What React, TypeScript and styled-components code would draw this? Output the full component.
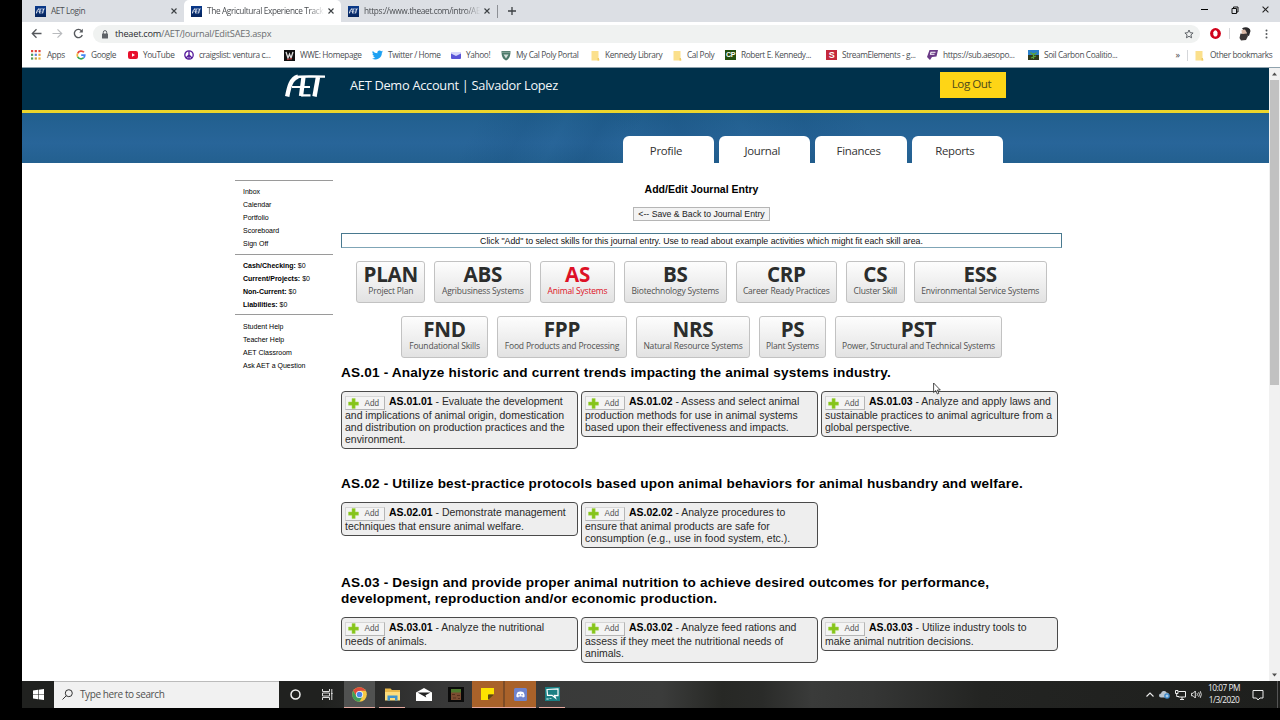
import React from "react";
import styled, { createGlobalStyle, css } from "styled-components";

const Global = createGlobalStyle`
  * { box-sizing: border-box; }
  html, body { margin: 0; padding: 0; background: #000; overflow: hidden; }
  body { font-family: "Liberation Sans", Arial, sans-serif; color: #000; }
  svg { display: block; flex: none; }
  button { font: inherit; margin: 0; padding: 0; }
`;

const ui = `"Open Sans", "Noto Sans", sans-serif`;

const Screen = styled.div`
  width: 1280px;
  height: 720px;
  padding-left: 22px;
  background: #000;
  overflow: hidden;
  position: relative;
`;

/* ---------- browser chrome ---------- */

const TabStrip = styled.div`
  height: 22px;
  display: flex;
  background: #dcdfe4;
  font-family: ${ui};
`;

const BrowserTab = styled.div<{ $w: number; $active?: boolean; $pad: number }>`
  width: ${(p) => p.$w}px;
  padding: 0 7px 0 ${(p) => p.$pad}px;
  display: flex;
  align-items: center;
  background: ${(p) => (p.$active ? "#fff" : "transparent")};
  border-radius: 5px 5px 0 0;
`;

const TabTitle = styled.span<{ $fade?: boolean }>`
  flex: 1;
  min-width: 0;
  margin-left: 5px;
  white-space: nowrap;
  font-size: 8.3px;
  line-height: 14px;
  letter-spacing: -0.38px;
  color: #4b4e52;
  ${(p) =>
    p.$fade &&
    css`
      mask-image: linear-gradient(90deg, #000 84%, transparent 97%);
    `}
`;

const TabDivider = styled.i`
  width: 1px;
  height: 13px;
  margin: 5px 10px 0 0;
  background: #8d9095;
`;

const WindowButtons = styled.div`
  margin-left: auto;
  width: 86px;
  display: flex;
  justify-content: space-between;
  align-items: center;
  padding: 0 11px 3px 7px;
`;

const Toolbar = styled.div`
  height: 23px;
  display: flex;
  align-items: center;
  background: #fff;
  padding-left: 9px;
`;

const NavIcons = styled.div`
  width: 62px;
  display: flex;
  align-items: center;
  gap: 10px;
`;

const Omnibox = styled.div`
  width: 1107px;
  height: 18px;
  border-radius: 9px;
  background: #f0f2f1;
  display: flex;
  align-items: center;
  padding: 0 6px 0 9px;
  margin-top: 1px;
`;

const Url = styled.span`
  flex: 1;
  margin-left: 7px;
  font: 9.2px/16px ${ui};
  letter-spacing: -0.24px;
  color: #6a6d70;
  b { font-weight: 400; color: #2b2d30; }
`;

const ToolbarEnd = styled.div`
  display: flex;
  align-items: center;
  gap: 8px;
  margin-left: 10px;
`;

const MenuDots = styled.svg`
  margin-left: 6px;
`;

const Bar = styled.i<{ $h: number; $c?: string }>`
  width: 1px;
  height: ${(p) => p.$h}px;
  background: ${(p) => p.$c ?? "#d5d7da"};
`;

const Bookmarks = styled.div`
  height: 23px;
  display: flex;
  align-items: center;
  background: #fff;
  padding: 0 0 2px 9px;
  border-bottom: 1px solid #8fa2ad;
`;

const Bookmark = styled.div<{ $w: number; $gap?: number }>`
  width: ${(p) => p.$w}px;
  display: flex;
  align-items: center;
  gap: ${(p) => p.$gap ?? 5}px;
  white-space: nowrap;
  font: 8.3px/14px ${ui};
  letter-spacing: -0.38px;
  color: #4b4e52;
`;

const BookmarkEnd = styled.div`
  margin-left: auto;
  display: flex;
  align-items: center;
  gap: 7px;
  font: 9px/14px ${ui};
  color: #444;
`;

/* ---------- page ---------- */

const Viewport = styled.div`
  height: 613px;
  display: flex;
  background: #fff;
`;

const Page = styled.div`
  width: 1247px;
  overflow: hidden;
`;

const SiteHeader = styled.header`
  height: 45px;
  padding: 4px 263px 0 263px;
  display: flex;
  align-items: flex-start;
  background: #00314b;
  border-bottom: 3px solid #edd52c;
`;

const Account = styled.div`
  margin: 4px 0 0 25px;
  font: 12.8px/18px ${ui};
  letter-spacing: -0.28px;
  color: #f3f7f9;
`;

const LogOut = styled.button`
  margin-left: auto;
  width: 66px;
  height: 26px;
  border: 0;
  background: #fed516;
  font: 11.6px/24px ${ui};
  letter-spacing: -0.45px;
  padding: 0 3px 2px 0;
  color: #4c4a1c;
`;

const Banner = styled.nav`
  height: 50px;
  padding-right: 266px;
  display: flex;
  justify-content: flex-end;
  align-items: flex-end;
  gap: 5px;
  background:
    linear-gradient(118deg, transparent 36%, rgba(10, 60, 105, 0.12) 40%, transparent 43%, rgba(10, 60, 105, 0.16) 46%, transparent 49%),
    linear-gradient(64deg, transparent 48%, rgba(10, 60, 105, 0.16) 53%, transparent 58%, rgba(10, 60, 105, 0.12) 63%, transparent 68%),
    linear-gradient(#215f8e, #286599 60%, #23608f);
`;

const NavTab = styled.a`
  width: 91.3px;
  height: 27px;
  padding-right: 5px;
  border-radius: 6px 6px 0 0;
  background: #fff;
  text-align: center;
  font: 11.4px/29px ${ui};
  letter-spacing: -0.3px;
  color: #333;
`;

const Columns = styled.div`
  display: flex;
  padding-left: 213px;
`;

const Sidebar = styled.aside`
  width: 98px;
  margin: 17px 8px 0 0;
  font-size: 7px;
  line-height: 13px;
`;

const SideGroup = styled.div<{ $h: number; $top: number }>`
  height: ${(p) => p.$h}px;
  padding: ${(p) => p.$top}px 0 0 8px;
  border-top: 1px solid #9a9a9a;
  white-space: nowrap;
  div { height: 13px; }
`;

const Main = styled.main`
  width: 721px;
`;

const Title = styled.h1`
  margin: 19px 0 0;
  text-align: center;
  font-size: 10.5px;
  line-height: 14px;
`;

const SaveButton = styled.button`
  display: block;
  width: 137px;
  height: 14px;
  margin: 11px auto 0;
  border: 1px solid #b5b5b5;
  background: #f3f3f3;
  font-size: 8.7px;
  line-height: 12px;
  white-space: nowrap;
  color: #222;
`;

const Notice = styled.div`
  height: 15px;
  margin-top: 12px;
  border: 1px solid #49798f;
  border-bottom-color: #7fa5b6;
  text-align: center;
  font-size: 8.75px;
  line-height: 14px;
  color: #111;
`;

const SkillRow = styled.div`
  display: flex;
  justify-content: center;
  gap: 9px;
  margin-top: 13px;
`;

const SkillTile = styled.button<{ $w: number; $on?: boolean }>`
  width: ${(p) => p.$w}px;
  height: 42px;
  flex: none;
  border: 1px solid #c2c2c2;
  border-radius: 3px;
  background: linear-gradient(#fdfdfd, #e2e2e2);
  display: flex;
  flex-direction: column;
  align-items: center;
  padding-top: 1px;
  font-family: ${ui};
  color: ${(p) => (p.$on ? "#dd1126" : "#2b2d2c")};
  strong { font-size: 20.6px; line-height: 22px; letter-spacing: -0.3px; }
  span {
    font-size: 8.5px;
    line-height: 12px;
    white-space: nowrap;
    letter-spacing: -0.18px;
    color: ${(p) => (p.$on ? "#dd1126" : "#505050")};
  }
`;

const Standards = styled.div`
  padding-top: 7px;
`;

const Section = styled.section<{ $h: number }>`
  height: ${(p) => p.$h}px;
  h2 {
    margin: 0 0 10px;
    font-size: 13.6px;
    line-height: 16px;
    letter-spacing: 0.185px;
    white-space: nowrap;
  }
`;

const Cards = styled.div`
  display: flex;
  align-items: flex-start;
  gap: 3px;
`;

const Card = styled.article`
  width: 237px;
  padding: 3px 0 2px 3px;
  border: 1px solid #4a4a4a;
  border-radius: 4px;
  background: #eee;
  font-size: 10.46px;
  line-height: 12px;
  white-space: nowrap;
  color: #2a2a2a;
  b { color: #000; }
`;

const FirstLine = styled.div`
  height: 15px;
  display: flex;
  line-height: 13px;
`;

const AddButton = styled.button`
  width: 40px;
  height: 14px;
  flex: none;
  margin: 1px 4px 0 0;
  border: 1px solid #d6d6d6;
  border-right-color: #b5b5b5;
  border-bottom-color: #b5b5b5;
  background: #f4f4f4;
  display: flex;
  align-items: center;
  padding-left: 2px;
  gap: 5.5px;
  font-size: 8.2px;
  color: #555;
`;

const Scrollbar = styled.div`
  width: 11px;
  background: #f1f1f1;
  display: flex;
  flex-direction: column;
  align-items: center;
  justify-content: space-between;
  padding: 4px 0;
`;

const Thumb = styled.div`
  width: 9px;
  height: 305px;
  margin: 4px 0 auto;
  background: #c1c1c1;
`;

/* ---------- taskbar ---------- */

const Taskbar = styled.div`
  height: 27px;
  display: flex;
  background: linear-gradient(90deg, #20211f 0, #20211f 300px, #383838 420px, #3b3c3b 640px, #272825 700px, #2a2b29 740px, #3a3b3a 790px, #353635 850px, #232422 960px, #1e1f1d 100%);
`;

const TaskCell = styled.div<{ $w: number; $bg?: string; $line?: boolean }>`
  width: ${(p) => p.$w}px;
  height: 27px;
  display: flex;
  align-items: center;
  justify-content: center;
  background: ${(p) => p.$bg ?? "transparent"};
  border-bottom: 1px solid ${(p) => (p.$line ? "#e6a9a0" : "transparent")};
`;

const Search = styled.div`
  width: 225px;
  background: #f1f1f1;
  border-top: 1px solid #bbb;
  display: flex;
  align-items: center;
  padding: 0 0 2px 8px;
  gap: 7px;
  font: 10px/16px ${ui};
  letter-spacing: -0.4px;
  color: #505050;
`;

const Tray = styled.div`
  margin-left: auto;
  display: flex;
  align-items: center;
  gap: 5px;
`;

const Clock = styled.div`
  width: 32px;
  margin: 0 7px 2px 1px;
  text-align: center;
  font: 8.3px/11.5px ${ui};
  letter-spacing: -0.48px;
  white-space: nowrap;
  color: #eee;
`;

const DesktopEdge = styled.i`
  width: 1px;
  height: 27px;
  margin: 0 2px 0 8px;
  background: #555;
`;

const Pointer = styled.svg`
  position: absolute;
  left: 933px;
  top: 382px;
`;

/* ---------- drawings ---------- */

const AetMark = ({ w, h }: { w: number; h: number }) => (
  <svg width={w} height={h} viewBox="0 0 40 22" fill="none" stroke="#fff">
    <path d="M2.200 21.500C4 12 6 3.500 13 1.700" strokeWidth="4.400" />
    <path d="M10 2.500C14 1 20 1.600 40 1.600" strokeWidth="2.400" />
    <path d="M18.500 2L16 21" strokeWidth="4.300" />
    <path d="M7 12H25M16 20.300H25.500" strokeWidth="2.200" />
    <path d="M33 2L29.500 21.500" strokeWidth="4.400" />
  </svg>
);

const Fav = styled.span`
  width: 11px;
  height: 11px;
  flex: none;
  display: flex;
  align-items: center;
  justify-content: center;
  background: linear-gradient(#0a3a8c, #06245c);
`;

const TabFav = () => (
  <Fav>
    <AetMark w={9} h={6} />
  </Fav>
);

const Cross = ({ s = 6, c = "#3c4043", w = 1.1 }: { s?: number; c?: string; w?: number }) => (
  <svg width={s} height={s} viewBox="0 0 6 6" stroke={c} strokeWidth={w}>
    <path d="M.5 .5L5.500 5.500M5.500 .5L.5 5.500" />
  </svg>
);

const Folder = () => (
  <svg width="9" height="11" viewBox="0 0 9 11">
    <path d="M.5 1h7v7.500l1 1V10.500h-8z" fill="#fbe08c" />
    <path d="M6.500 8h1.500v2.500H6.500z" fill="#f0cb62" />
  </svg>
);

const AppsIcon = () => (
  <svg width="10" height="10" viewBox="0 0 10 10">
    {["#e0463b", "#e0463b", "#e0463b", "#4f9a5b", "#5b80d8", "#e8a13a", "#4f9a5b", "#c0a040", "#e8b33a"].map((c, i) => (
      <rect key={i} x={(i % 3) * 3.7} y={Math.floor(i / 3) * 3.7} width="2.200" height="2.200" fill={c} />
    ))}
  </svg>
);

const GoogleIcon = () => (
  <svg width="10" height="10" viewBox="0 0 10 10" fill="none" strokeWidth="1.700">
    <path d="M8 2.300A3.800 3.800 0 0 0 1.700 3.300" stroke="#e8453c" />
    <path d="M1.700 3.300a3.800 3.800 0 0 0 0 3.500" stroke="#f4b63a" />
    <path d="M1.700 6.800A3.800 3.800 0 0 0 7.500 7.900" stroke="#35a853" />
    <path d="M7.500 7.900A3.600 3.600 0 0 0 8.800 5.100H5.200" stroke="#4285f4" />
  </svg>
);

const YouTubeIcon = () => (
  <svg width="10" height="8" viewBox="0 0 10 8">
    <rect width="10" height="8" rx="2" fill="#e8112d" />
    <path d="M4 2.300L7 4 4 5.700z" fill="#fff" />
  </svg>
);

const PeaceIcon = () => (
  <svg width="10" height="10" viewBox="0 0 10 10" fill="none" stroke="#551a9b" strokeWidth="1.300">
    <circle cx="5" cy="5" r="4.200" />
    <path d="M5 1v8M5 5L2 8M5 5l3 3" />
  </svg>
);

const WweIcon = () => (
  <svg width="11" height="11" viewBox="0 0 11 11">
    <rect width="11" height="11" fill="#111" />
    <path d="M2 2l2 6 1.500-4L7 8l2-6" fill="none" stroke="#ddd" strokeWidth="1.300" />
    <path d="M3 9.500l5-1" stroke="#b33" />
  </svg>
);

const TwitterIcon = () => (
  <svg width="11" height="10" viewBox="0 0 24 20">
    <path
      fill="#1da1f2"
      d="M24 2.400a10 10 0 0 1-2.800.8A5 5 0 0 0 23.300.5a10 10 0 0 1-3.100 1.200 4.900 4.900 0 0 0-8.400 4.500A14 14 0 0 1 1.700 1a4.900 4.900 0 0 0 1.500 6.600A5 5 0 0 1 1 7a4.900 4.900 0 0 0 3.900 4.900 5 5 0 0 1-2.200.1 4.900 4.900 0 0 0 4.600 3.400A9.900 9.900 0 0 1 0 17.500 14 14 0 0 0 21.500 5z"
    />
  </svg>
);

const YahooIcon = () => (
  <svg width="10" height="7" viewBox="0 0 10 7">
    <rect width="10" height="7" rx="1" fill="#5a55d8" />
    <path d="M0 1.500L5 4l5-2.500V0H0z" fill="#d7d8fa" />
  </svg>
);

const ShieldIcon = () => (
  <svg width="10" height="11" viewBox="0 0 10 11">
    <path d="M.5 1h9c0 5-1 8-4.500 9.500C1.500 9 .5 6 .5 1z" fill="#4d7a6b" />
    <path d="M2.500 4.500h5L5 8.500z" fill="#d5e0db" />
    <path d="M1 2.300h8" stroke="#a8beb5" strokeWidth=".7" />
  </svg>
);

const LetterBox = styled.span<{ $bg: string; $fs: number }>`
  width: 11px;
  height: 10px;
  flex: none;
  background: ${(p) => p.$bg};
  color: #fff;
  text-align: center;
  font: bold ${(p) => p.$fs}px/10px "Liberation Sans", sans-serif;
`;

const AesopIcon = () => (
  <svg width="11" height="10" viewBox="0 0 11 10">
    <path d="M2.500 0H11L9.500 6.500 5 7 3 10 0 7z" fill="#6a3a86" />
    <path d="M8.500 2.200H4L3.500 4.200H7.500" fill="none" stroke="#fff" strokeWidth="1.100" />
  </svg>
);

const SoilIcon = () => (
  <svg width="11" height="10" viewBox="0 0 11 10">
    <rect width="11" height="5" fill="#2a7fc9" />
    <rect y="5" width="11" height="5" fill="#2f3a1c" />
    <path d="M5.500 9V3M5.500 5L2.500 2.500M5.500 5l3-2.500M3 8l5-2" stroke="#5aa33c" strokeWidth="1.200" />
  </svg>
);

const Plus = () => (
  <svg width="11" height="11" viewBox="0 0 11 11">
    <path d="M4 .5h3.200V4h3.300v3.200H7.200v3.300H4V7.200H.5V4H4z" fill="#86c41c" stroke="#a6d653" strokeWidth=".5" />
  </svg>
);

const ChromeIcon = () => (
  <svg width="15" height="15" viewBox="0 0 16 16">
    <circle cx="8" cy="8" r="7.800" fill="#f6c945" />
    <path d="M8 8L1.250 4.100A7.800 7.800 0 0 1 14.750 4.100L8 4.100z" fill="#df4b3c" />
    <path d="M1.250 4.100L8 2.500V8L4.600 9.900z" fill="#df4b3c" />
    <path d="M1.250 4.100A7.800 7.800 0 0 0 8 15.800L11 10.500 4.600 9.900z" fill="#3f9e58" />
    <circle cx="8" cy="8" r="3.800" fill="#fff" />
    <circle cx="8" cy="8" r="3" fill="#4a86e8" />
  </svg>
);

/* ---------- content ---------- */

type Mark = { icon: React.ReactNode; text: string; w: number; gap?: number };

const marks: Mark[] = [
  { icon: <AppsIcon />, text: "Apps", w: 45, gap: 6 },
  { icon: <GoogleIcon />, text: "Google", w: 52 },
  { icon: <YouTubeIcon />, text: "YouTube", w: 56 },
  { icon: <PeaceIcon />, text: "craigslist: ventura c...", w: 100 },
  { icon: <WweIcon />, text: "WWE: Homepage", w: 88 },
  { icon: <TwitterIcon />, text: "Twitter / Home", w: 79 },
  { icon: <YahooIcon />, text: "Yahoo!", w: 50 },
  { icon: <ShieldIcon />, text: "My Cal Poly Portal", w: 90 },
  { icon: <Folder />, text: "Kennedy Library", w: 82 },
  { icon: <Folder />, text: "Cal Poly", w: 52 },
  { icon: <LetterBox $bg="#24500f" $fs={7}>CP</LetterBox>, text: "Robert E. Kennedy...", w: 101 },
  { icon: <LetterBox $bg="#c4283c" $fs={9}>S</LetterBox>, text: "StreamElements - g...", w: 101 },
  { icon: <AesopIcon />, text: "https://sub.aesopo...", w: 101 },
  { icon: <SoilIcon />, text: "Soil Carbon Coalitio...", w: 100 },
];

type Tile = { code: string; name: string; w: number; on?: boolean };

const tileRows: Tile[][] = [
  [
    { code: "PLAN", name: "Project Plan", w: 69 },
    { code: "ABS", name: "Agribusiness Systems", w: 97 },
    { code: "AS", name: "Animal Systems", w: 74.5, on: true },
    { code: "BS", name: "Biotechnology Systems", w: 103 },
    { code: "CRP", name: "Career Ready Practices", w: 101 },
    { code: "CS", name: "Cluster Skill", w: 59 },
    { code: "ESS", name: "Environmental Service Systems", w: 133 },
  ],
  [
    { code: "FND", name: "Foundational Skills", w: 86.5 },
    { code: "FPP", name: "Food Products and Processing", w: 130.5 },
    { code: "NRS", name: "Natural Resource Systems", w: 113.5 },
    { code: "PS", name: "Plant Systems", w: 67.5 },
    { code: "PST", name: "Power, Structural and Technical Systems", w: 166.5 },
  ],
];

const sections = [
  {
    h: 110.5,
    title: ["AS.01 - Analyze historic and current trends impacting the animal systems industry."],
    cards: [
      ["AS.01.01", "Evaluate the development", "and implications of animal origin, domestication", "and distribution on production practices and the", "environment."],
      ["AS.01.02", "Assess and select animal", "production methods for use in animal systems", "based upon their effectiveness and impacts."],
      ["AS.01.03", "Analyze and apply laws and", "sustainable practices to animal agriculture from a", "global perspective."],
    ],
  },
  {
    h: 99,
    title: ["AS.02 - Utilize best-practice protocols based upon animal behaviors for animal husbandry and welfare."],
    cards: [
      ["AS.02.01", "Demonstrate management", "techniques that ensure animal welfare."],
      ["AS.02.02", "Analyze procedures to", "ensure that animal products are safe for", "consumption (e.g., use in food system, etc.)."],
    ],
  },
  {
    h: 100,
    title: [
      "AS.03 - Design and provide proper animal nutrition to achieve desired outcomes for performance,",
      "development, reproduction and/or economic production.",
    ],
    cards: [
      ["AS.03.01", "Analyze the nutritional", "needs of animals."],
      ["AS.03.02", "Analyze feed rations and", "assess if they meet the nutritional needs of", "animals."],
      ["AS.03.03", "Utilize industry tools to", "make animal nutrition decisions."],
    ],
  },
];

const balances = ["Cash/Checking", "Current/Projects", "Non-Current", "Liabilities"];

export default function App() {
  return (
    <>
      <Global />
      <Screen>
        <TabStrip>
          <BrowserTab $w={162} $pad={13}>
            <TabFav />
            <TabTitle>AET Login</TabTitle>
            <Cross />
          </BrowserTab>
          <BrowserTab $w={157} $pad={7} $active>
            <TabFav />
            <TabTitle $fade>The Agricultural Experience Track</TabTitle>
            <Cross />
          </BrowserTab>
          <BrowserTab $w={156} $pad={7}>
            <TabFav />
            <TabTitle $fade>https://www.theaet.com/intro/AE</TabTitle>
            <Cross />
          </BrowserTab>
          <TabDivider />
          <svg width="8" height="22" viewBox="0 0 8 22" stroke="#3c4043" strokeWidth="1.300">
            <path d="M4 7v8M0 11h8" />
          </svg>
          <WindowButtons>
            <svg width="7" height="7" viewBox="0 0 7 7" stroke="#000">
              <path d="M0 3.500h7" />
            </svg>
            <svg width="8" height="8" viewBox="0 0 8 8" fill="none" stroke="#111">
              <path d="M1 2.500h4.500V7.500H1zM2.500 2.500V1H7v5H5.500" />
            </svg>
            <Cross s={7} c="#222" w={0.9} />
          </WindowButtons>
        </TabStrip>

        <Toolbar>
          <NavIcons>
            <svg width="11" height="11" viewBox="0 0 11 11" fill="none" stroke="#55585c" strokeWidth="1.300">
              <path d="M10.500 5.500H1.500M5.500 1.300L1.300 5.500l4.200 4.200" />
            </svg>
            <svg width="11" height="11" viewBox="0 0 11 11" fill="none" stroke="#b9bbbe" strokeWidth="1.200">
              <path d="M.5 5.500h9M5.500 1.300l4.200 4.200-4.200 4.200" />
            </svg>
            <svg width="11" height="11" viewBox="0 0 11 11" fill="none" stroke="#55585c" strokeWidth="1.400">
              <path d="M9.300 7A4.100 4.100 0 1 1 8.500 2.700" />
              <path d="M9.800 .8V4.500H6.200z" fill="#55585c" stroke="none" />
            </svg>
          </NavIcons>
          <Omnibox>
            <svg width="6" height="9" viewBox="0 0 6 9" fill="none">
              <rect y="3.500" width="6" height="5" rx=".6" fill="#5f6368" />
              <path d="M1.300 4V2.300a1.700 1.700 0 0 1 3.400 0V4" stroke="#5f6368" />
            </svg>
            <Url>
              <b>theaet.com</b>/AET/Journal/EditSAE3.aspx
            </Url>
            <svg width="10" height="10" viewBox="0 0 10 10" fill="none" stroke="#5f6368">
              <path d="M5 1l1.200 2.700 2.900.3-2.200 1.900.7 2.900L5 7.300 2.400 8.800l.7-2.900L.9 4l2.900-.3z" />
            </svg>
          </Omnibox>
          <ToolbarEnd>
            <svg width="11" height="11" viewBox="0 0 11 11">
              <circle cx="5.500" cy="5.500" r="5.400" fill="#d0021b" />
              <path d="M3.300 4.300l1-1.500 1.200-.6 1.300.8.700 1.500v2.400L6.300 8.500H4.500L3.300 7z" fill="#fff" />
            </svg>
            <Bar $h={11} />
            <svg width="13" height="14" viewBox="0 0 13 14">
              <path d="M4 1.500C7-.5 12 0 12.500 4L11 9 8 8 5.500 3z" fill="#2b2a2c" />
              <path d="M3.500 3L7 2.500 9 6 7.500 9 4 8z" fill="#d9b8a6" />
              <path d="M2.500 6.500L5 7l3.500-.5L10 9l-2 4-5 .5L1.500 11z" fill="#3b3636" />
            </svg>
            <MenuDots width="3" height="10" viewBox="0 0 3 10" fill="#55585c">
              <circle cx="1.500" cy="1.500" r="1" />
              <circle cx="1.500" cy="5" r="1" />
              <circle cx="1.500" cy="8.500" r="1" />
            </MenuDots>
          </ToolbarEnd>
        </Toolbar>

        <Bookmarks>
          {marks.map((m) => (
            <Bookmark key={m.text} $w={m.w} $gap={m.gap}>
              {m.icon}
              {m.text}
            </Bookmark>
          ))}
          <BookmarkEnd>
            »
            <Bar $h={11} />
            <Bookmark $w={85} $gap={6}>
              <Folder />
              Other bookmarks
            </Bookmark>
          </BookmarkEnd>
        </Bookmarks>

        <Viewport>
          <Page>
            <SiteHeader>
              <AetMark w={40} h={28} />
              <Account>AET Demo Account | Salvador Lopez</Account>
              <LogOut>Log Out</LogOut>
            </SiteHeader>
            <Banner>
              {["Profile", "Journal", "Finances", "Reports"].map((t) => (
                <NavTab key={t}>{t}</NavTab>
              ))}
            </Banner>
            <Columns>
              <Sidebar>
                <SideGroup $h={74} $top={4}>
                  {["Inbox", "Calendar", "Portfolio", "Scoreboard", "Sign Off"].map((t) => (
                    <div key={t}>{t}</div>
                  ))}
                </SideGroup>
                <SideGroup $h={60} $top={4}>
                  {balances.map((t) => (
                    <div key={t}>
                      <b>{t}:</b> $0
                    </div>
                  ))}
                </SideGroup>
                <SideGroup $h={60} $top={5}>
                  {["Student Help", "Teacher Help", "AET Classroom", "Ask AET a Question"].map((t) => (
                    <div key={t}>{t}</div>
                  ))}
                </SideGroup>
              </Sidebar>
              <Main>
                <Title>Add/Edit Journal Entry</Title>
                <SaveButton>&lt;-- Save &amp; Back to Journal Entry</SaveButton>
                <Notice>
                  Click "Add" to select skills for this journal entry. Use to read about example activities which might fit each skill area.
                </Notice>
                {tileRows.map((row, i) => (
                  <SkillRow key={i}>
                    {row.map((t) => (
                      <SkillTile key={t.code} $w={t.w} $on={t.on}>
                        <strong>{t.code}</strong>
                        <span>{t.name}</span>
                      </SkillTile>
                    ))}
                  </SkillRow>
                ))}
                <Standards>
                  {sections.map((s) => (
                    <Section key={s.title[0]} $h={s.h}>
                      <h2>
                        {s.title.map((l) => (
                          <div key={l}>{l}</div>
                        ))}
                      </h2>
                      <Cards>
                        {s.cards.map(([code, first, ...rest]) => (
                          <Card key={code}>
                            <FirstLine>
                              <AddButton>
                                <Plus />
                                Add
                              </AddButton>
                              <span>
                                <b>{code}</b> - {first}
                              </span>
                            </FirstLine>
                            {rest.map((l) => (
                              <div key={l}>{l}</div>
                            ))}
                          </Card>
                        ))}
                      </Cards>
                    </Section>
                  ))}
                </Standards>
              </Main>
            </Columns>
          </Page>
          <Scrollbar>
            <svg width="5" height="4" viewBox="0 0 5 4">
              <path d="M0 3.500L2.500 .5 5 3.500z" fill="#505050" />
            </svg>
            <Thumb />
            <svg width="5" height="4" viewBox="0 0 5 4">
              <path d="M0 .5L2.500 3.500 5 .5z" fill="#505050" />
            </svg>
          </Scrollbar>
        </Viewport>

        <Taskbar>
          <TaskCell $w={32}>
            <svg width="11" height="11" viewBox="0 0 11 11" fill="#fff">
              <path d="M0 1.500L5 .8v4.400H0zM5.600 .7L11 0v5.200H5.600zM0 5.800h5v4.400L0 9.500zM5.600 5.800H11V11l-5.400-.7z" />
            </svg>
          </TaskCell>
          <Search>
            <svg width="11" height="11" viewBox="0 0 11 11" fill="none" stroke="#333">
              <circle cx="6.800" cy="4.200" r="3.500" />
              <path d="M4.300 6.700L.5 10.500" />
            </svg>
            Type here to search
          </Search>
          <TaskCell $w={32}>
            <svg width="11" height="11" viewBox="0 0 11 11" fill="none" stroke="#f2f2f2" strokeWidth="1.500">
              <circle cx="5.500" cy="5.500" r="4.500" />
            </svg>
          </TaskCell>
          <TaskCell $w={33}>
            <svg width="11" height="11" viewBox="0 0 11 11" fill="none" stroke="#ddd">
              <path d="M.5 0v2.500h7V0M.5 11V8.500h7V11M.5 4h7v3h-7zM9.800 0v11M9 4.500h1.600" />
            </svg>
          </TaskCell>
          <TaskCell $w={31} $bg="#515251" $line>
            <ChromeIcon />
          </TaskCell>
          <TaskCell $w={4} />
          <TaskCell $w={26} $line>
            <svg width="15" height="13" viewBox="0 0 15 13">
              <path d="M0 .5h5.500L7 2h8v10H0z" fill="#e9b84a" />
              <path d="M0 4h15v8.500H0z" fill="#fbdc7d" />
              <path d="M2.500 12.500V7.500h10v5h-2.500V10h-5v2.500z" fill="#3d93cf" />
            </svg>
          </TaskCell>
          <TaskCell $w={38}>
            <svg width="16" height="13" viewBox="0 0 16 13">
              <path d="M0 4.500L8 0l8 4.500V13H0z" fill="#fff" />
              <path d="M1.500 4.600h13L9.500 7.300l.8 2.200z" fill="#222" />
            </svg>
          </TaskCell>
          <TaskCell $w={26}>
            <svg width="16" height="15" viewBox="0 0 16 15">
              <rect width="16" height="15" fill="#0a0a0a" />
              <rect x="3" y="2" width="10" height="11" fill="#7a4c30" />
              <rect x="3" y="2" width="10" height="3.500" fill="#4e7a2e" />
              <path d="M4 7.500h3M9 8.500h3M5 11h3M10 11.500h2" stroke="#55301c" />
            </svg>
          </TaskCell>
          <TaskCell $w={3} />
          <TaskCell $w={30.5} $bg="#a9622a" $line>
            <svg width="13" height="12" viewBox="0 0 13 12">
              <path d="M0 0h13v6.500H8V12H0z" fill="#fde300" />
              <path d="M7 6.500h6L7 12z" fill="#5c4a12" />
            </svg>
          </TaskCell>
          <TaskCell $w={2} $bg="#7d4c26" $line />
          <TaskCell $w={31.5} $bg="#a9622a" $line>
            <svg width="13" height="13" viewBox="0 0 13 13">
              <rect width="13" height="13" rx="1.500" fill="#6f83cc" />
              <path d="M3.500 4.200C5 3.400 8 3.400 9.500 4.200c.8 1.300 1.200 2.800 1.200 4.300-.6.6-1.400.9-2 .9l-.5-.8H4.800l-.5.8c-.7 0-1.400-.3-2-.9 0-1.500.4-3 1.200-4.300z" fill="#fff" />
              <circle cx="5" cy="6.700" r=".8" fill="#6f83cc" />
              <circle cx="8" cy="6.700" r=".8" fill="#6f83cc" />
            </svg>
          </TaskCell>
          <TaskCell $w={3} />
          <TaskCell $w={26} $line>
            <svg width="15" height="14" viewBox="0 0 15 14" fill="none">
              <rect width="15" height="14" fill="#1b7f83" />
              <path d="M2 2.500l11-.5v6.500L9.500 8.300 10.500 11 7 8.300H2.500z" stroke="#fff" strokeWidth="1.200" />
              <path d="M1.500 11l2 2M3.500 11l-2 2M4.500 11.500h2" stroke="#bfe3e3" strokeWidth=".8" />
            </svg>
          </TaskCell>
          <Tray>
            <svg width="8" height="5" viewBox="0 0 8 5" fill="none" stroke="#eee" strokeWidth="1.100">
              <path d="M.5 4.500L4 1l3.500 3.500" />
            </svg>
            <svg width="11" height="9" viewBox="0 0 11 9">
              <path d="M2 7.500a2 2 0 0 1 0-4A3 3 0 0 1 7.500 2.500 2.500 2.500 0 0 1 10 5v2.500z" fill="#b9c4cf" />
              <circle cx="8" cy="6" r="2.800" fill="#3c87c8" />
              <path d="M6.500 6h3M8 4.500v3" stroke="#fff" strokeWidth=".7" />
            </svg>
            <svg width="11" height="10" viewBox="0 0 11 10" fill="none" stroke="#eee">
              <path d="M3.500 1.500h7v5.500h-7M5 9.500h4M7 7v2.500M.5 .5h2.500v3H.5zM1.700 3.500v3H4" />
            </svg>
            <svg width="11" height="9" viewBox="0 0 11 9" fill="none" stroke="#eee" strokeWidth=".9">
              <path d="M.5 3.300h1.600L4.300 1v7L2.100 5.800H.5zM6 3.200q.8 1.300 0 2.600M7.700 2.200q1.500 2.300 0 4.600M9.300 1.200q2 3.300 0 6.600" />
            </svg>
            <Clock>
              10:07 PM
              <br />
              1/3/2020
            </Clock>
            <svg width="12" height="12" viewBox="0 0 12 12" fill="none" stroke="#eee">
              <path d="M1 1.500h10v7.500H8L6 11 4.500 9H1z" />
            </svg>
            <DesktopEdge />
          </Tray>
        </Taskbar>

        <Pointer width="8" height="13" viewBox="0 0 8 13" fill="#fff" stroke="#222" strokeWidth=".8">
          <path d="M.6 1v9.500L2.800 8.500 4.300 12l1.500-.7L4.400 8H7.300z" />
        </Pointer>
      </Screen>
    </>
  );
}
